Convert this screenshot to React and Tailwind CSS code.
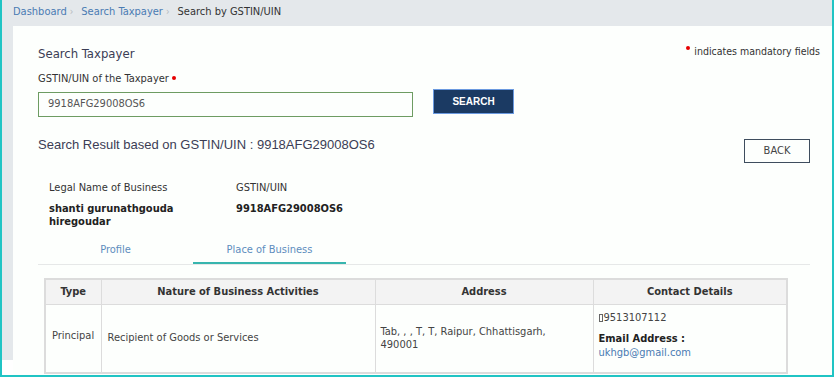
export default function App() {
  return (
    <div className="w-[836px] h-[379px] bg-white font-['DejaVu_Sans_Condensed','DejaVu_Sans',sans-serif] text-[11px] text-[#333]">
      <div className="w-[834px] h-[377px] border-l-2 border-r-2 border-b-2 border-[#20c4c4] flex flex-col overflow-hidden bg-white">
        <div className="h-[26px] shrink-0 bg-[#e4e8eb] flex items-center pl-[11px] pb-[2px] leading-[14px]">
          <span className="text-[#4a7bb3]">Dashboard</span>
          <span className="text-[#b4b9be] ml-[3px] mr-[8px] text-[10px]">›</span>
          <span className="text-[#4a7bb3]">Search Taxpayer</span>
          <span className="text-[#b4b9be] ml-[3px] mr-[8px] text-[10px]">›</span>
          <span className="text-[#333]">Search by GSTIN/UIN</span>
        </div>
        <div className="flex items-start flex-1 min-h-0">
          <div className="w-[11px] h-[334px] bg-[#e4e8eb] shrink-0" />
          <div className="flex-1 self-stretch bg-[#fdfffd] pt-[20px]">
            <div className="flex justify-between pl-[25px] pr-[12px]">
              <div className="text-[13px] leading-[16px] text-[#3b3d55]">Search Taxpayer</div>
              <div className="flex items-start mt-[-2px] text-[10.5px] leading-[14px] text-[#333]">
                <span className="w-[4px] h-[4px] rounded-full bg-[#e60000] mt-[2px] mr-[4px]" />
                <span>indicates mandatory fields</span>
              </div>
            </div>
            <div className="mt-[10px] pl-[25px] flex items-start leading-[14px] text-[#333]">
              <span>GSTIN/UIN of the Taxpayer</span>
              <span className="w-[4px] h-[4px] rounded-full bg-[#e60000] mt-[4px] ml-[3px]" />
            </div>
            <div className="mt-[6px] pl-[25px] flex items-start">
              <div className="w-[375px] h-[25px] border border-[#6d9c62] pl-[9px] flex items-center text-[#555]">
                9918AFG29008OS6
              </div>
              <div className="ml-[20px] mt-[-3px] w-[81px] h-[25px] bg-[#1b3a63] border border-[#6b9ae0] flex items-center justify-center text-white font-bold text-[10px] font-['Liberation_Sans',sans-serif]">
                SEARCH
              </div>
            </div>
            <div className="mt-[20px] flex justify-between items-start pl-[25px] pr-[22px]">
              <div className="text-[13px] leading-[16px] text-[#3b3d55] font-['Liberation_Sans',sans-serif]">
                Search Result based on GSTIN/UIN : 9918AFG29008OS6
              </div>
              <div className="mt-[2px] w-[66px] h-[24px] border border-[#3e4d5e] flex items-center justify-center text-[#444]">
                BACK
              </div>
            </div>
            <div className="mt-[18px] pl-[36px] flex leading-[14px]">
              <div className="w-[187px] pr-[27px]">
                <div className="text-[#333]">Legal Name of Business</div>
                <div className="mt-[7px] font-bold leading-[13px] text-[#222]">shanti gurunathgouda hiregoudar</div>
              </div>
              <div>
                <div className="text-[#333]">GSTIN/UIN</div>
                <div className="mt-[7px] font-bold leading-[13px] text-[#222]">9918AFG29008OS6</div>
              </div>
            </div>
            <div className="mt-[9px] ml-[25px] mr-[22px] flex border-b border-[#e6e8e8]">
              <div className="w-[155px] h-[27px] pt-[6px] text-center leading-[14px] text-[#5d8dbd]">Profile</div>
              <div className="w-[153px] h-[27px] pt-[6px] text-center leading-[14px] text-[#5d8dbd] border-b-2 border-[#37b5ae]">Place of Business</div>
            </div>
            <table className="mt-[13px] ml-[31px] w-[742px] table-fixed border-collapse border-2 border-[#dcdcdc] leading-[14px]">
              <thead>
                <tr className="h-[25px] bg-[#f3f3f3]">
                  <th className="w-[56px] border border-[#dcdcdc] font-bold text-center text-[#333] p-0">Type</th>
                  <th className="w-[274px] border border-[#dcdcdc] font-bold text-center text-[#333] p-0">Nature of Business Activities</th>
                  <th className="w-[218px] border border-[#dcdcdc] font-bold text-center text-[#333] p-0">Address</th>
                  <th className="w-[194px] border border-[#dcdcdc] font-bold text-center text-[#333] p-0">Contact Details</th>
                </tr>
              </thead>
              <tbody>
                <tr className="h-[67px]">
                  <td className="border border-[#dcdcdc] pl-[6px] pb-[5px] align-middle text-[#444]">Principal</td>
                  <td className="border border-[#dcdcdc] pl-[6px] align-middle text-[#444]">Recipient of Goods or Services</td>
                  <td className="border border-[#dcdcdc] pl-[5px] align-middle leading-[13px] text-[#444]">
                    Tab, , , T, T, Raipur, Chhattisgarh,<br />490001
                  </td>
                  <td className="border border-[#dcdcdc] pl-[5px] pt-[6px] pb-[12px] align-top">
                    <div className="flex items-center text-[#444]">
                      <span className="inline-block w-[4px] h-[8px] border border-[#666] mr-[1px]" />
                      <span>9513107112</span>
                    </div>
                    <div className="mt-[7px] font-bold text-[#222]">Email Address :</div>
                    <div className="text-[#4a7bb3]">ukhgb@gmail.com</div>
                  </td>
                </tr>
              </tbody>
            </table>
          </div>
        </div>
      </div>
    </div>
  );
}
